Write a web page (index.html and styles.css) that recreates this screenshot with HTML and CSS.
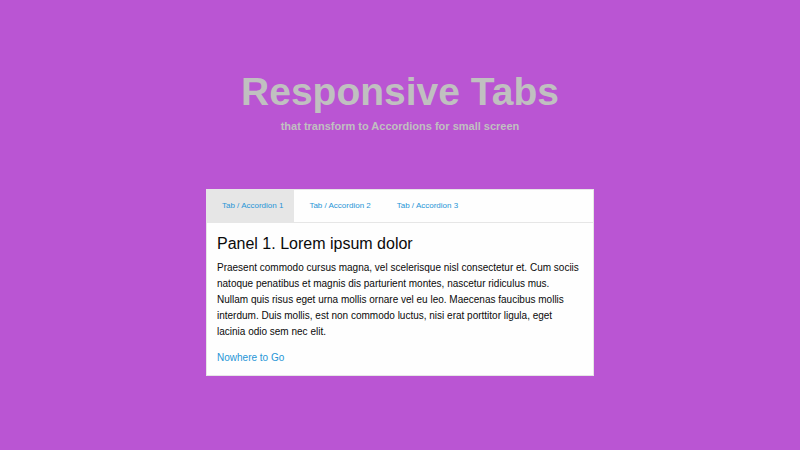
FILE: index.html
```html
<!DOCTYPE html>
<html lang="en">
<head>
    <meta charset="UTF-8">
    <meta name="viewport" content="width=device-width, initial-scale=1.0">
    <title>Responsive Tabs</title>
    <link rel="stylesheet" href="styles.css">
</head>
<body>

<header class="page-header">
    <h1>Responsive Tabs</h1>
    <h2>that transform to Accordions for small screen</h2>
</header>

<main class="tabs-container">
    <ul class="tabs">
        <li class="tabs-title is-active"><a href="#panel1">Tab / Accordion 1</a></li>
        <li class="tabs-title"><a href="#panel2">Tab / Accordion 2</a></li>
        <li class="tabs-title"><a href="#panel3">Tab / Accordion 3</a></li>
    </ul>
    <div class="tabs-panel" id="panel1">
        <h3>Panel 1. Lorem ipsum dolor</h3>
        <p>Praesent commodo cursus magna, vel scelerisque nisl consectetur et. Cum sociis natoque penatibus et magnis dis parturient montes, nascetur ridiculus mus. Nullam quis risus eget urna mollis ornare vel eu leo. Maecenas faucibus mollis interdum. Duis mollis, est non commodo luctus, nisi erat porttitor ligula, eget lacinia odio sem nec elit.</p>
        <p><a href="#">Nowhere to Go</a></p>
    </div>
</main>

</body>
</html>
```
FILE: styles.css
```css
* {
    box-sizing: border-box;
}
body {
    margin: 0;
    padding: 68px 16px;
    background-color: #ba55d3;
    color: #0a0a0a;
    font-family: "Liberation Sans", Arial, sans-serif;
    font-size: 10px;
}
a {
    color: #2795d6;
    text-decoration: none;
}
.page-header {
    margin-bottom: 53px;
    text-align: center;
    color: #c0c0c0;
}
.page-header h1 {
    margin: 0;
    font-size: 39px;
    line-height: 48px;
}
.page-header h2 {
    margin: 0;
    font-size: 11px;
    line-height: 20px;
}
.tabs-container {
    max-width: 388px;
    margin: 0 auto;
    border: 1px solid #e6e6e6;
    background-color: #fefefe;
}
.tabs {
    display: flex;
    margin: 0;
    padding: 0;
    list-style: none;
    border-bottom: 1px solid #e6e6e6;
}
.tabs-title a {
    display: block;
    padding: 10px 11px 10px 15px;
    font-size: 8px;
    line-height: 12px;
}
.tabs-title.is-active a {
    background-color: #e6e6e6;
}
.tabs-panel {
    padding: 10px 10px 9px;
}
.tabs-panel h3 {
    margin: 0 0 5px;
    font-size: 16px;
    font-weight: normal;
    line-height: 22px;
}
.tabs-panel p {
    margin: 0 0 10px;
    line-height: 16px;
}
.tabs-panel p:last-child {
    margin-bottom: 0;
}
```
